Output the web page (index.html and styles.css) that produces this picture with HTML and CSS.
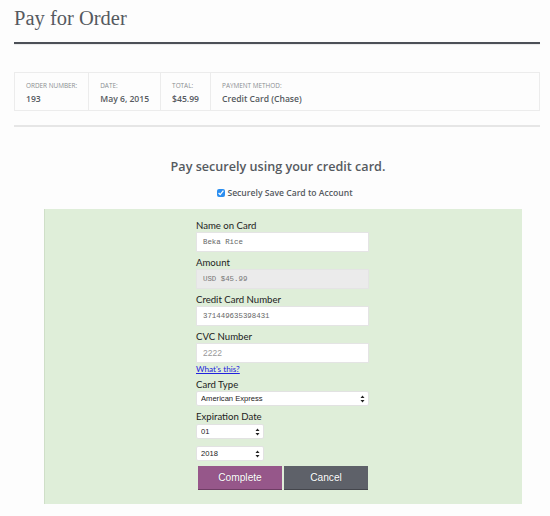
FILE: index.html
```html
<!DOCTYPE html>
<html>
<head>
<meta charset="utf-8">
<link rel="stylesheet" href="styles.css">
</head>
<body>
<div class="page">
  <h1 class="title">Pay for Order</h1>
  <div class="rule-dark"></div>
  <ul class="order-details">
    <li class="od-cell"><span class="od-label">Order number:</span><span class="od-value">193</span></li>
    <li class="od-cell"><span class="od-label">Date:</span><span class="od-value">May 6, 2015</span></li>
    <li class="od-cell"><span class="od-label">Total:</span><span class="od-value">$45.99</span></li>
    <li class="od-cell od-last"><span class="od-label">Payment method:</span><span class="od-value">Credit Card (Chase)</span></li>
  </ul>
  <div class="rule-light"></div>
  <h2 class="pay-heading">Pay securely using your credit card.</h2>
  <label class="save-row"><input type="checkbox" class="save-check" checked> Securely Save Card to Account</label>
  <div class="pay-box">
    <form class="pay-form">
      <div class="field">
        <label class="f-label">Name on Card</label>
        <input class="f-input mono" type="text" value="Beka Rice">
      </div>
      <div class="field">
        <label class="f-label">Amount</label>
        <input class="f-input mono disabled" type="text" value="USD $45.99" readonly>
      </div>
      <div class="field">
        <label class="f-label">Credit Card Number</label>
        <input class="f-input mono" type="text" value="371449635398431">
      </div>
      <div class="field field-tight">
        <label class="f-label">CVC Number</label>
        <input class="f-input sans" type="text" value="2222">
      </div>
      <a class="whats" href="#">What's this?</a>
      <div class="field field-sel">
        <label class="f-label">Card Type</label>
        <span class="sel-wrap sel-full">
          <select class="f-select"><option>American Express</option></select>
          <svg class="sel-arrow" width="5" height="8" viewBox="0 0 5 8"><path d="M2.5 0.5 L4.5 3 L0.5 3 Z M2.5 7.5 L4.5 5 L0.5 5 Z" fill="#222"/></svg>
        </span>
      </div>
      <div class="field field-sel">
        <label class="f-label">Expiration Date</label>
        <span class="sel-wrap sel-small">
          <select class="f-select"><option>01</option></select>
          <svg class="sel-arrow" width="5" height="8" viewBox="0 0 5 8"><path d="M2.5 0.5 L4.5 3 L0.5 3 Z M2.5 7.5 L4.5 5 L0.5 5 Z" fill="#222"/></svg>
        </span>
        <span class="sel-wrap sel-small sel-second">
          <select class="f-select"><option>2018</option></select>
          <svg class="sel-arrow" width="5" height="8" viewBox="0 0 5 8"><path d="M2.5 0.5 L4.5 3 L0.5 3 Z M2.5 7.5 L4.5 5 L0.5 5 Z" fill="#222"/></svg>
        </span>
      </div>
      <div class="buttons">
        <button type="button" class="btn btn-complete">Complete</button>
        <button type="button" class="btn btn-cancel">Cancel</button>
      </div>
    </form>
  </div>
</div>
</body>
</html>
```
FILE: styles.css
```css
html, body {
  margin: 0;
  padding: 0;
  background: #fdfdfd;
}
.page {
  padding: 0 10px 0 14px;
  font-family: "Open Sans", "Liberation Sans", sans-serif;
  color: #555a60;
}
.title {
  margin: 0;
  padding-top: 8px;
  font-family: "Liberation Serif", serif;
  font-weight: normal;
  font-size: 20.5px;
  line-height: 21px;
  color: #55595f;
  height: 34px;
}
.rule-dark {
  height: 2px;
  background: #4c5057;
  box-shadow: 0 1px 1px rgba(0,0,0,0.08);
}
.order-details {
  list-style: none;
  margin: 28px 0 0 0;
  padding: 0;
  display: flex;
  border: 1px solid #ececec;
  box-sizing: border-box;
  height: 39px;
  background: #fdfdfd;
}
.od-cell {
  display: flex;
  flex-direction: column;
  padding: 8px 11px 0 11px;
  border-right: 1px solid #ececec;
}
.od-last {
  border-right: none;
}
.od-label {
  text-transform: uppercase;
  font-size: 6.4px;
  line-height: 10px;
  color: #8a8d91;
}
.od-value {
  font-size: 8.6px;
  line-height: 14px;
  margin-top: 1px;
  color: #555a60;
  font-weight: 600;
}
.rule-light {
  margin-top: 14px;
  height: 2px;
  background: #e6e6e6;
}
.pay-heading {
  margin: 30px 0 0 0;
  text-align: center;
  font-size: 12.6px;
  line-height: 20px;
  font-weight: 600;
  color: #555a60;
  padding-left: 2px;
}
.save-row {
  display: flex;
  justify-content: center;
  align-items: center;
  margin-top: 10px;
  font-size: 8.6px;
  line-height: 12px;
  font-weight: 600;
  color: #555a60;
  padding-left: 16px;
  gap: 2px;
}
.save-check {
  width: 8px;
  height: 8px;
  margin: 0;
  accent-color: #2b8ef0;
}
.pay-box {
  margin: 10px 18px 0 30px;
  height: 295px;
  box-sizing: border-box;
  background: #dfeed9;
  border-left: 1px solid #cfdfc8;
  display: flex;
  justify-content: center;
}
.pay-form {
  width: 173px;
  margin-left: -2px;
  padding-top: 11px;
  font-family: "Lato", "Liberation Sans", sans-serif;
}
.field {
  display: flex;
  flex-direction: column;
  margin-bottom: 5px;
}
.field-tight {
  margin-bottom: 1px;
}
.f-label {
  font-size: 9.6px;
  line-height: 12px;
  color: #222;
}
.f-input {
  height: 20px;
  box-sizing: border-box;
  border: 1px solid #e4e4e4;
  background: #fff;
  padding: 0 6px;
  margin: 0;
  color: #666;
  outline: none;
}
.mono {
  font-family: "Liberation Mono", monospace;
  font-size: 7.4px;
}
.sans {
  font-family: "Liberation Sans", sans-serif;
  font-size: 8.5px;
  color: #999;
}
.disabled {
  background: #ebebeb;
  color: #777;
}
.whats {
  display: block;
  font-size: 8.2px;
  line-height: 11px;
  color: #2222dd;
  margin-bottom: 4px;
}
.field-sel {
  margin-bottom: 5px;
}
.sel-wrap {
  position: relative;
  display: block;
  height: 15px;
}
.sel-full {
  width: 173px;
}
.sel-small {
  width: 68px;
  height: 15px;
  margin-top: 1px;
}
.sel-second {
  margin-top: 7px;
}
.f-select {
  display: block;
  appearance: none;
  -webkit-appearance: none;
  width: 100%;
  height: 100%;
  box-sizing: border-box;
  border: 1px solid #e2e2e2;
  border-radius: 2px;
  background: #fff;
  padding: 0 0 0 4px;
  margin: 0;
  font-family: "Liberation Sans", sans-serif;
  font-size: 7.6px;
  color: #222;
  outline: none;
}
.sel-arrow {
  position: absolute;
  right: 4px;
  top: 50%;
  margin-top: -4px;
}
.buttons {
  display: flex;
  gap: 2px;
  margin-left: 2px;
  margin-top: 1px;
}
.btn {
  width: 84px;
  height: 24px;
  border: none;
  margin: 0;
  padding: 0;
  font-family: "Liberation Sans", sans-serif;
  font-size: 10.2px;
  color: #fff;
  text-shadow: 0 0 1px rgba(0,0,0,0.3);
}
.btn-complete {
  background: #96578a;
  border-bottom: 1px solid #6e3d64;
}
.btn-cancel {
  background: #5e6169;
  border-bottom: 1px solid #44464c;
}
```
